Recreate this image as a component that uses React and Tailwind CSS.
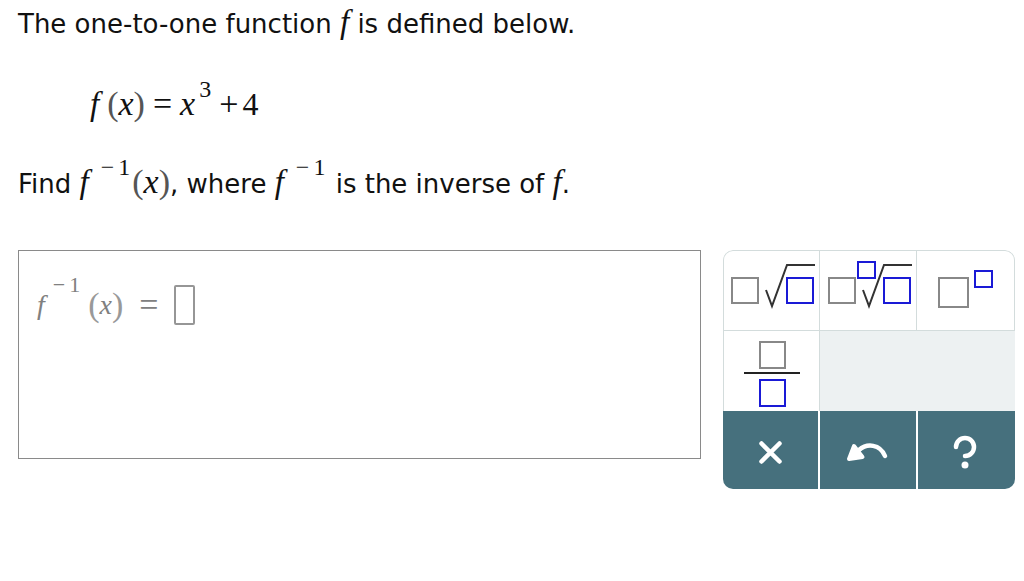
import React from "react";

const serif = "font-['Liberation_Serif',serif]";

function F() {
  return <i className={`${serif} text-[33px] leading-none`}>f</i>;
}

function Inverse() {
  return (
    <span className={`${serif} mr-[2px] ml-3 inline-flex items-baseline gap-1 align-[18px] text-[24px] leading-0`}>
      <span>−</span>
      <span>1</span>
    </span>
  );
}

function OfX() {
  return (
    <span className={`${serif} text-[34px] leading-none`}>
      <span className="text-[#555]">(</span>
      <i>x</i>
      <span className="text-[#555]">)</span>
    </span>
  );
}

function Key({ label, className, children }) {
  return (
    <button type="button" aria-label={label} className={`flex items-center justify-center ${className}`}>
      {children}
    </button>
  );
}

export default function App() {
  return (
    <main className="min-h-screen bg-white pt-1 pr-[9px] pl-[18px] font-['DejaVu_Sans',sans-serif] text-[26px] text-[#111]">
      <p className="h-10 leading-10 whitespace-nowrap">
        The one-to-one function <F /> is defined below.
      </p>

      <p className={`${serif} mt-10 flex h-10 items-baseline pl-[72px] text-[34px] leading-10 whitespace-nowrap`}>
        <F />
        <span className="ml-2"><OfX /></span>
        <span className="ml-2">=</span>
        <span className="ml-2">
          <i>x</i>
          <span className="ml-1 align-[18px] text-[24px] leading-0">3</span>
        </span>
        <span className="ml-2">+</span>
        <span className="ml-1 text-[32px]">4</span>
      </p>

      <p className="mt-10 h-10 leading-10 whitespace-nowrap">
        Find <F /><Inverse /><OfX />, where <F /><Inverse /> is the inverse of <F />.
      </p>

      <div className="mt-[46px] flex items-start gap-[22px]">
        <section className="h-[209px] min-w-0 flex-1 border border-[#8a8a8a] pt-[34px] pl-[18px]">
          <label className={`${serif} flex h-10 items-center text-[28px] leading-10 text-[#808080]`}>
            <i>f</i>
            <span className="ml-2 flex gap-1 self-start text-[22px] leading-0">
              <span>−</span>
              <span>1</span>
            </span>
            <span className="ml-2 text-[34px] text-[#999]">(</span>
            <i>x</i>
            <span className="text-[34px] text-[#999]">)</span>
            <span className="ml-4 text-[34px]">=</span>
            <input aria-label="Inverse function" className="ml-4 h-10 w-[21px] rounded-xs border-2 border-[#969696] bg-white text-center" />
          </label>
        </section>

        <div role="group" aria-label="Math keypad" className="w-[292px] overflow-hidden rounded-[10px]">
          <div className="grid grid-cols-[95px_96px_1fr] gap-x-px rounded-t-[10px] border border-b-0 border-[#d3dcdc] bg-[#d3dcdc]">
            <Key label="Square root" className="h-[79px] rounded-tl-[9px] bg-white">
              <svg width="95" height="79" viewBox="0 0 95 79" fill="none">
                <rect x="8" y="27" width="26" height="25" stroke="#888" strokeWidth="2" />
                <path d="M42 39L48 55L63 14H91" stroke="#333" strokeWidth="2" />
                <rect x="63" y="27" width="26" height="25" stroke="#1a1ad6" strokeWidth="2" />
              </svg>
            </Key>
            <Key label="Nth root" className="h-[79px] bg-white">
              <svg width="96" height="79" viewBox="0 0 96 79" fill="none">
                <rect x="9" y="27" width="26" height="25" stroke="#888" strokeWidth="2" />
                <path d="M43 39L49 55L64 14H92" stroke="#333" strokeWidth="2" />
                <rect x="38" y="11" width="17" height="16" stroke="#1a1ad6" strokeWidth="2" />
                <rect x="64" y="27" width="26" height="25" stroke="#1a1ad6" strokeWidth="2" />
              </svg>
            </Key>
            <Key label="Exponent" className="h-[79px] rounded-tr-[9px] bg-white">
              <svg width="97" height="79" viewBox="0 0 97 79" fill="none">
                <rect x="22" y="27" width="29" height="29" stroke="#888" strokeWidth="2" />
                <rect x="58" y="20" width="17" height="16" stroke="#1a1ad6" strokeWidth="2" />
              </svg>
            </Key>
          </div>
          <div className="grid grid-cols-[97px_1fr] border-t border-[#d3dcdc] bg-[#edf1f2]">
            <Key label="Fraction" className="h-20 border-x border-[#d3dcdc] bg-white">
              <svg width="95" height="80" viewBox="0 0 95 80" fill="none">
                <rect x="36" y="11" width="25" height="26" stroke="#888" strokeWidth="2" />
                <path d="M20 42H76" stroke="#222" strokeWidth="2" />
                <rect x="36" y="49" width="25" height="26" stroke="#1a1ad6" strokeWidth="2" />
              </svg>
            </Key>
          </div>
          <div className="grid grid-cols-[95px_96px_1fr] gap-x-[2px] bg-white">
            <Key label="Clear" className="h-[78px] bg-[#46707d]">
              <svg width="95" height="78" viewBox="0 0 95 78" fill="none">
                <path d="M38.500 32.500L56.500 50.500M56.500 32.500L38.500 50.500" stroke="white" strokeWidth="4.500" strokeLinecap="round" />
              </svg>
            </Key>
            <Key label="Undo" className="h-[78px] bg-[#46707d]">
              <svg width="96" height="78" viewBox="0 0 96 78" fill="none">
                <path d="M39 39C47 32 60 33 65 45" stroke="white" strokeWidth="4.500" strokeLinecap="round" />
                <path d="M34 35L42.500 46L29 48Z" fill="white" stroke="white" strokeWidth="4" strokeLinejoin="round" />
              </svg>
            </Key>
            <Key label="Help" className="h-[78px] bg-[#46707d]">
              <svg width="97" height="78" viewBox="0 0 97 78" fill="none">
                <path d="M38 36A9 9 0 1 1 47 45" stroke="white" strokeWidth="4.500" strokeLinecap="round" />
                <circle cx="47" cy="54" r="3.500" fill="white" />
              </svg>
            </Key>
          </div>
        </div>
      </div>
    </main>
  );
}
